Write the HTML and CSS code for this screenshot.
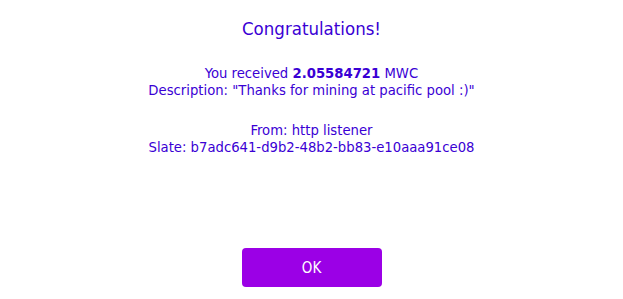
FILE: index.html
```html
<!DOCTYPE html>
<html lang="en">
<head>
    <meta charset="UTF-8">
    <meta name="viewport" content="width=device-width, initial-scale=1.0">
    <title>Congratulations</title>

    <link rel="stylesheet" href="styles.css">
</head>
<body>
    <div class="dialog">
        <h1 class="title">Congratulations!</h1>

        <div class="message">
            <p>You received <b>2.05584721</b> MWC<br>
            Description: "Thanks for mining at pacific pool :)"</p>
            <p>From: http listener<br>
            Slate: b7adc641-d9b2-48b2-bb83-e10aaa91ce08</p>
        </div>

        <button class="ok-btn">OK</button>
    </div>
</body>
</html>
```

FILE: styles.css
```css
body {
    margin: 0;
    background: #fff;
    font-family: "DejaVu Sans Condensed", "DejaVu Sans", Tahoma, sans-serif;
}

.dialog {
    display: flex;
    flex-direction: column;
    align-items: center;
    height: 299px;
    box-sizing: border-box;
    padding-top: 18px;
}

.title {
    margin: 0;
    font-size: 18.5px;
    font-weight: normal;
    line-height: 22px;
    color: #3a00d4;
}

.message {
    flex: 1;
    margin-top: 24px;
    text-align: center;
    font-size: 14.7px;
    line-height: 17px;
    color: #3a00d4;
}

.message p {
    margin: 0 0 23px 0;
}

.ok-btn {
    width: 140px;
    height: 39px;
    margin-bottom: 12px;
    border: none;
    border-radius: 4px;
    background: #9b00e6;
    color: #fff;
    font-family: inherit;
    font-size: 15px;
}
```
